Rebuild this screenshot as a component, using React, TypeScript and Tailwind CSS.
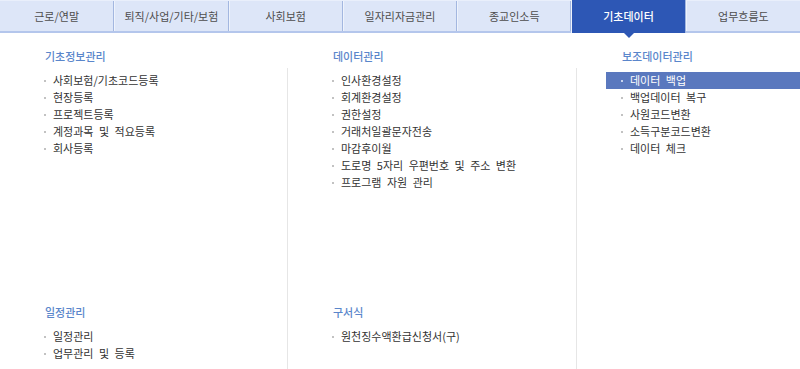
import React from 'react';

const tabs = ['근로/연말', '퇴직/사업/기타/보험', '사회보험', '일자리자금관리', '종교인소득', '기초데이터', '업무흐름도'];
const activeTab = 5;

type Section = { title: string; items: string[] };

const columns: { top: Section; bottom?: Section }[] = [
  {
    top: { title: '기초정보관리', items: ['사회보험/기초코드등록', '현장등록', '프로젝트등록', '계정과목 및 적요등록', '회사등록'] },
    bottom: { title: '일정관리', items: ['일정관리', '업무관리 및 등록'] },
  },
  {
    top: {
      title: '데이터관리',
      items: ['인사환경설정', '회계환경설정', '권한설정', '거래처일괄문자전송', '마감후이월', '도로명 5자리 우편번호 및 주소 변환', '프로그램 자원 관리'],
    },
    bottom: { title: '구서식', items: ['원천징수액환급신청서(구)'] },
  },
  {
    top: { title: '보조데이터관리', items: ['데이터 백업', '백업데이터 복구', '사원코드변환', '소득구분코드변환', '데이터 체크'] },
  },
];

const selected = '데이터 백업';

const Item = ({ label }: { label: string }) => {
  const on = label === selected;
  return (
    <li
      className={`ml-[29px] pl-[15px] h-[17px] flex items-center ${on ? 'bg-[#5a78be] text-white' : 'text-[#333333]'}`}
    >
      <span className={`w-[2px] h-[2px] mr-[7px] ${on ? 'bg-[#c9d4ee]' : 'bg-[#c2c2c2]'}`} />
      <span className="[word-spacing:3px]">{label}</span>
    </li>
  );
};

const Title = ({ text }: { text: string }) => (
  <div className="pl-[45px] h-[17px] leading-[17px] text-[#5a86cb] font-medium">{text}</div>
);

export default function App() {
  return (
    <div
      className="w-[800px] h-[369px] overflow-hidden bg-white text-[11px]"
      style={{ fontFamily: '"Noto Sans CJK KR", "Noto Sans", sans-serif' }}
    >
      {/* tab bar */}
      <div className="relative grid grid-cols-7 h-[33px] bg-[#dde6f8] border-t border-[#e9effb] border-b-2 border-b-[#b4c6ec]">
        {tabs.map((t, i) => (
          <div
            key={t}
            className={`relative flex items-center justify-center ${i < tabs.length - 1 ? 'border-r border-[#a3b7e0]' : ''} ${
              i > 0 ? 'border-l border-l-[#eef3fc]' : ''
            } ${i === activeTab ? 'bg-[#2d57b5] text-white font-medium -mt-px -mb-[2px]' : 'text-[#4d4d4d]'}`}
          >
            {t}
            {i === activeTab && (
              <span className="absolute left-1/2 -translate-x-1/2 top-full w-0 h-0 border-l-[5px] border-r-[5px] border-t-[5px] border-l-transparent border-r-transparent border-t-[#2d57b5]" />
            )}
          </div>
        ))}
      </div>

      {/* menu columns */}
      <div className="grid grid-cols-[288px_289px_1fr] h-[336px]">
        {columns.map((col, ci) => (
          <div key={ci} className="flex flex-col">
            <div className="pt-[15px] h-[35px]">
              <Title text={col.top.title} />
            </div>
            <div className={`flex-1 ${ci > 0 ? 'border-l border-[#e6e6e6] -ml-px' : ''}`}>
              <ul className="pt-[4px] h-[236px]">
                {col.top.items.map((it) => (
                  <Item key={it} label={it} />
                ))}
              </ul>
              {col.bottom && (
                <div>
                  <Title text={col.bottom.title} />
                  <ul className="mt-[7px]">
                    {col.bottom.items.map((it) => (
                      <Item key={it} label={it} />
                    ))}
                  </ul>
                </div>
              )}
            </div>
          </div>
        ))}
      </div>
    </div>
  );
}
